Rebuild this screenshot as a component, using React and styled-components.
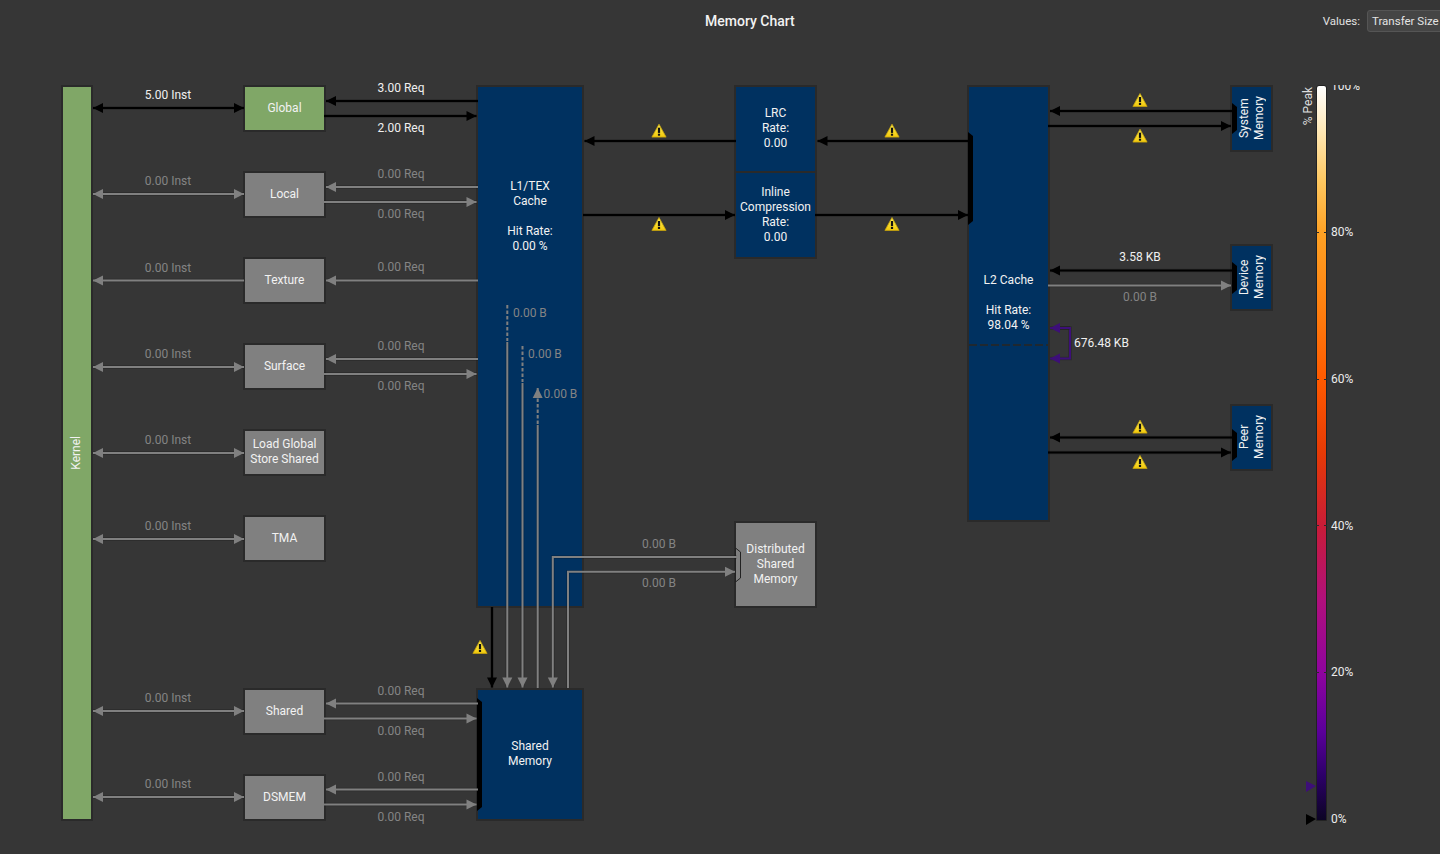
import React from "react";
import styled, { createGlobalStyle } from "styled-components";

const HEADER = 42;
const FONT = `Roboto, "Noto Sans", sans-serif`;
const TONES = { on: "#000000", off: "#808080", loop: "#3d0f78" };

const GlobalStyle = createGlobalStyle`
  html, body {
    margin: 0;
    height: 100%;
    background: #363636;
    overflow: hidden;
  }
  body {
    font-family: ${FONT};
    font-size: 12px;
    color: #eeeeee;
  }
`;

const Page = styled.div`
  width: 1440px;
  height: 854px;
  display: flex;
  flex-direction: column;
  overflow: hidden;
`;

const Header = styled.header`
  height: ${HEADER}px;
  flex: none;
  display: flex;
  align-items: center;
  padding-left: 705px;
`;

const Title = styled.h1`
  margin: 0;
  font-size: 14px;
  font-weight: 500;
  line-height: 1;
  color: #f2f2f2;
`;

const Controls = styled.div`
  margin-left: auto;
  margin-right: -5px;
  display: flex;
  align-items: center;
  gap: 7px;
  font-size: 11.5px;
`;

const ControlLabel = styled.span`
  color: #e0e0e0;
`;

const SelectButton = styled.button`
  height: 22px;
  width: 78px;
  padding: 0 0 0 4px;
  font: inherit;
  text-align: left;
  color: #e4e4e4;
  background: #454545;
  border: 1px solid #555555;
  border-radius: 3px;
`;

const Chart = styled.main`
  position: relative;
  flex: 1;
`;

const Node = styled.div`
  position: absolute;
  left: ${(p) => p.$x}px;
  top: ${(p) => p.$y - HEADER}px;
  width: ${(p) => p.$w}px;
  height: ${(p) => p.$h}px;
  box-sizing: border-box;
  display: flex;
  align-items: center;
  justify-content: center;
  padding-bottom: ${(p) => p.$lift || 1}px;
  background: ${(p) => ({ green: "#80a767", gray: "#808080", navy: "#003160" })[p.$kind]};
  border: 2px solid #2a2a2a;
  color: #f2f2f2;
  line-height: 15px;
  text-align: center;
  white-space: pre-line;
`;

const VerticalText = styled.span`
  writing-mode: vertical-rl;
  transform: rotate(180deg);
  margin-right: ${(p) => p.$nudge || 0}px;
`;

const Split = styled.div`
  position: absolute;
  left: 0;
  right: 0;
  top: 257px;
  height: 2px;
  background: repeating-linear-gradient(to right, #1f2830 0 8px, transparent 8px 11px);
`;

const Overlay = styled.svg`
  position: absolute;
  inset: 0;
  width: 1440px;
  height: ${854 - HEADER}px;
  pointer-events: none;
`;

const Label = styled.span`
  position: absolute;
  left: ${(p) => p.$x}px;
  top: ${(p) => p.$y - HEADER}px;
  transform: translate(${(p) => (p.$left ? "0" : "-50%")}, -50%);
  line-height: 15px;
  white-space: nowrap;
  color: ${(p) => (p.$off ? "#848484" : "#f0f0f0")};
`;

const Legend = styled.aside`
  position: absolute;
  left: 1300px;
  top: ${85 - HEADER}px;
  display: flex;
  gap: 4px;
`;

const PeakLabel = styled.span`
  height: max-content;
  margin-top: 2px;
  margin-left: 1px;
  margin-right: -3px;
  writing-mode: vertical-rl;
  transform: rotate(180deg);
  line-height: 14px;
  color: #dddddd;
`;

const Bar = styled.div`
  position: relative;
  width: 11px;
  height: 736px;
  box-sizing: border-box;
  border: 1px solid #222222;
  border-radius: 3px 3px 0 0;
  background: linear-gradient(
    to bottom,
    #ffffff 0%,
    #ffe9b8 6%,
    #ffc860 13%,
    #ffa224 20%,
    #ff8110 30%,
    #ff5a00 40%,
    #e63a06 50%,
    #c81c38 60%,
    #b0107c 70%,
    #8e049e 80%,
    #5a009a 88%,
    #2c0068 94%,
    #0c0424 100%
  );
`;

const Tick = styled.i`
  position: absolute;
  left: -1px;
  right: -1px;
  top: ${(p) => p.$at}%;
  height: 1px;
  background: linear-gradient(
    to right,
    #2a2a2a 0 3px,
    transparent 3px 8px,
    #2a2a2a 8px 11px
  );
`;

const Stops = styled.div`
  height: 742px;
  overflow: hidden;
  display: flex;
  flex-direction: column;
  justify-content: space-between;
`;

const Stop = styled.span`
  line-height: 15px;
  color: #ececec;

  &:first-child {
    margin-top: -6.5px;
  }
`;

const nodes = [
  { x: 61, y: 85, w: 32, h: 736, kind: "green", text: "Kernel", nudge: 2 },
  { x: 243, y: 85, w: 83, h: 47, kind: "green", text: "Global" },
  { x: 243, y: 171, w: 83, h: 47, kind: "gray", text: "Local" },
  { x: 243, y: 257, w: 83, h: 47, kind: "gray", text: "Texture" },
  { x: 243, y: 343, w: 83, h: 47, kind: "gray", text: "Surface" },
  { x: 243, y: 429, w: 83, h: 47, kind: "gray", text: "Load Global\nStore Shared" },
  { x: 243, y: 515, w: 83, h: 47, kind: "gray", text: "TMA" },
  { x: 243, y: 688, w: 83, h: 47, kind: "gray", text: "Shared" },
  { x: 243, y: 774, w: 83, h: 47, kind: "gray", text: "DSMEM" },
  { x: 476, y: 85, w: 108, h: 523, kind: "navy", text: "L1/TEX\nCache\n\nHit Rate:\n0.00 %", lift: 261 },
  { x: 476, y: 688, w: 108, h: 133, kind: "navy", text: "Shared\nMemory" },
  { x: 734, y: 85, w: 83, h: 88, kind: "navy", text: "LRC\nRate:\n0.00" },
  { x: 734, y: 171, w: 83, h: 88, kind: "navy", text: "Inline\nCompression\nRate:\n0.00" },
  { x: 734, y: 521, w: 83, h: 87, kind: "gray", text: "Distributed\nShared\nMemory" },
  { x: 967, y: 85, w: 83, h: 437, kind: "navy", text: "L2 Cache\n\nHit Rate:\n98.04 %", split: true },
  { x: 1230, y: 85, w: 43, h: 67, kind: "navy", text: "System\nMemory", vertical: true },
  { x: 1230, y: 244, w: 43, h: 67, kind: "navy", text: "Device\nMemory", vertical: true },
  { x: 1230, y: 404, w: 43, h: 67, kind: "navy", text: "Peer\nMemory", vertical: true },
];

// memory pipes: kernel side row, then the request lines into L1 / shared memory
const rows = [
  { y: 108, on: true, inst: "5.00 Inst", up: [101, 88, "3.00 Req"], down: [116, 128, "2.00 Req"] },
  { y: 194, inst: "0.00 Inst", up: [187, 174, "0.00 Req"], down: [202, 214, "0.00 Req"] },
  { y: 280.5, inst: "0.00 Inst", oneWay: true, up: [280.5, 267, "0.00 Req"] },
  { y: 367, inst: "0.00 Inst", up: [359, 346, "0.00 Req"], down: [374, 386, "0.00 Req"] },
  { y: 453, inst: "0.00 Inst" },
  { y: 539, inst: "0.00 Inst" },
  { y: 711, inst: "0.00 Inst", up: [703.5, 690.5, "0.00 Req"], down: [718.5, 730.5, "0.00 Req"] },
  { y: 797, inst: "0.00 Inst", up: [789.5, 776.5, "0.00 Req"], down: [804.5, 816.5, "0.00 Req"] },
];

const rowArrows = rows.flatMap((r) => {
  const tone = r.on ? "on" : "off";
  const list = [
    r.oneWay
      ? { points: [[244, r.y], [93, r.y]], end: true, tone }
      : { points: [[93, r.y], [244, r.y]], start: true, end: true, tone },
  ];
  if (r.up) list.push({ points: [[478, r.up[0]], [326, r.up[0]]], end: true, tone });
  if (r.down) list.push({ points: [[324, r.down[0]], [476.5, r.down[0]]], end: true, tone });
  return list;
});

const arrows = [
  ...rowArrows,
  { points: [[736, 141], [584.5, 141]], end: true, tone: "on" },
  { points: [[969, 141], [817.5, 141]], end: true, tone: "on" },
  { points: [[583, 215], [735, 215]], end: true, tone: "on" },
  { points: [[815, 215], [968, 215]], end: true, tone: "on" },
  { points: [[1232, 111], [1050, 111]], end: true, tone: "on" },
  { points: [[1048, 126], [1231, 126]], end: true, tone: "on" },
  { points: [[1232, 270.5], [1050, 270.5]], end: true, tone: "on" },
  { points: [[1048, 285.5], [1231, 285.5]], end: true, tone: "off" },
  { points: [[1232, 437.5], [1050, 437.5]], end: true, tone: "on" },
  { points: [[1048, 452.5], [1231, 452.5]], end: true, tone: "on" },
  { points: [[1060, 328], [1070, 328], [1070, 358.5], [1050, 358.5]], end: true, tone: "loop" },
  { points: [[1070, 328], [1050, 328]], end: true, tone: "loop" },
  { points: [[492, 607], [492, 687.5]], end: true, tone: "on" },
  { points: [[507.3, 342], [507.3, 687.5]], end: true, tone: "off" },
  { points: [[507.3, 305], [507.3, 341]], dash: true, tone: "off" },
  { points: [[522.5, 383], [522.5, 687.5]], end: true, tone: "off" },
  { points: [[522.5, 346], [522.5, 382]], dash: true, tone: "off" },
  { points: [[537.7, 425], [537.7, 688]], tone: "off" },
  { points: [[537.7, 424], [537.7, 388]], dash: true, end: true, tone: "off" },
  { points: [[737, 557], [552.8, 557], [552.8, 687.5]], end: true, tone: "off" },
  { points: [[568, 688], [568, 571.7], [735, 571.7]], end: true, tone: "off" },
];

const warnings = [
  [659, 130.7], [892, 130.7], [659, 224], [892, 224],
  [1140, 100], [1140, 135.7], [1140, 426.7], [1140, 462], [480, 647],
];

const ports = [
  { x: 968, top: 132, bottom: 225 },
  { x: 477, top: 698, bottom: 811 },
  { x: 1232, top: 103, bottom: 134 },
  { x: 1232, top: 262, bottom: 294 },
  { x: 1232, top: 429, bottom: 461 },
  { x: 735.5, top: 548, bottom: 582, fill: "#808080", outline: "#222222" },
];

const labels = [
  ...rows.flatMap((r) => {
    const off = !r.on;
    const list = [{ x: 168, y: r.y - 13, text: r.inst, off }];
    if (r.up) list.push({ x: 401, y: r.up[1], text: r.up[2], off });
    if (r.down) list.push({ x: 401, y: r.down[1], text: r.down[2], off });
    return list;
  }),
  { x: 1140, y: 257, text: "3.58 KB" },
  { x: 1140, y: 297, text: "0.00 B", off: true },
  { x: 1074, y: 343, text: "676.48 KB", left: true },
  { x: 513, y: 313, text: "0.00 B", off: true, left: true },
  { x: 528, y: 353.5, text: "0.00 B", off: true, left: true },
  { x: 543.5, y: 394, text: "0.00 B", off: true, left: true },
  { x: 659, y: 543.5, text: "0.00 B", off: true },
  { x: 659, y: 582.5, text: "0.00 B", off: true },
];

const scaleStops = ["100%", "80%", "60%", "40%", "20%", "0%"];

function Arrow({ points, start, end, tone, dash }) {
  const color = TONES[tone];
  const line = points.map((p) => p.join(",")).join(" ");
  const head = (from, to) => {
    const len = Math.hypot(to[0] - from[0], to[1] - from[1]);
    const ux = (to[0] - from[0]) / len;
    const uy = (to[1] - from[1]) / len;
    const bx = to[0] - ux * 10;
    const by = to[1] - uy * 10;
    const base = [bx - uy * 5, by + ux * 5, bx + uy * 5, by - ux * 5];
    return `${to[0]},${to[1]} ${base[0]},${base[1]} ${base[2]},${base[3]}`;
  };
  return (
    <g>
      {!dash && <polyline points={line} fill="none" stroke="#000000" strokeOpacity="0.2" strokeWidth="3.6" />}
      <polyline
        points={line}
        fill="none"
        stroke={color}
        strokeWidth="2"
        strokeDasharray={dash ? "3.5 2" : undefined}
      />
      {end && <polygon points={head(points[points.length - 2], points[points.length - 1])} fill={color} />}
      {start && <polygon points={head(points[1], points[0])} fill={color} />}
    </g>
  );
}

function Warning({ x, y }) {
  return (
    <g transform={`translate(${x - 7.5} ${y - 7})`}>
      <path d="M7.5 0.5 L14.6 13.4 L0.4 13.4 Z" fill="url(#warnFill)" stroke="#c9a50c" strokeWidth="0.8" strokeLinejoin="round" />
      <rect x="6.4" y="4" width="2.2" height="5.2" fill="#111111" />
      <rect x="6.4" y="10" width="2.2" height="2" fill="#111111" />
    </g>
  );
}

function Port({ x, top, bottom, fill = "#000000", outline }) {
  return (
    <polygon
      points={`${x},${top} ${x + 5},${top + 4} ${x + 5},${bottom - 4} ${x},${bottom}`}
      fill={fill}
      stroke={outline}
    />
  );
}

export default function App() {
  return (
    <Page>
      <GlobalStyle />
      <Header>
        <Title>Memory Chart</Title>
        <Controls>
          <ControlLabel>Values:</ControlLabel>
          <SelectButton>Transfer Size</SelectButton>
        </Controls>
      </Header>
      <Chart>
        {nodes.map((n) => (
          <Node key={n.text} $x={n.x} $y={n.y} $w={n.w} $h={n.h} $kind={n.kind} $lift={n.lift}>
            {n.vertical || n.nudge ? <VerticalText $nudge={n.nudge}>{n.text}</VerticalText> : n.text}
            {n.split && <Split />}
          </Node>
        ))}
        <Overlay viewBox={`0 ${HEADER} 1440 ${854 - HEADER}`}>
          <defs>
            <linearGradient id="warnFill" x1="0" y1="0" x2="0" y2="1">
              <stop offset="0" stopColor="#fff055" />
              <stop offset="1" stopColor="#f2c90c" />
            </linearGradient>
          </defs>
          {ports.map((p) => (
            <Port key={`${p.x}-${p.top}`} {...p} />
          ))}
          {arrows.map((a, i) => (
            <Arrow key={i} {...a} />
          ))}
          {warnings.map(([x, y]) => (
            <Warning key={`${x}-${y}`} x={x} y={y} />
          ))}
          <polygon points="1306,781 1316,786 1306,792" fill="#3d0f78" />
          <polygon points="1306,814 1316,819 1306,825" fill="#000000" />
        </Overlay>
        {labels.map((l, i) => (
          <Label key={i} $x={l.x} $y={l.y} $off={l.off} $left={l.left}>
            {l.text}
          </Label>
        ))}
        <Legend>
          <PeakLabel>% Peak</PeakLabel>
          <Bar>
            <Tick $at={19.9} />
            <Tick $at={39.9} />
            <Tick $at={59.8} />
            <Tick $at={79.8} />
          </Bar>
          <Stops>
            {scaleStops.map((s) => (
              <Stop key={s}>{s}</Stop>
            ))}
          </Stops>
        </Legend>
      </Chart>
    </Page>
  );
}
